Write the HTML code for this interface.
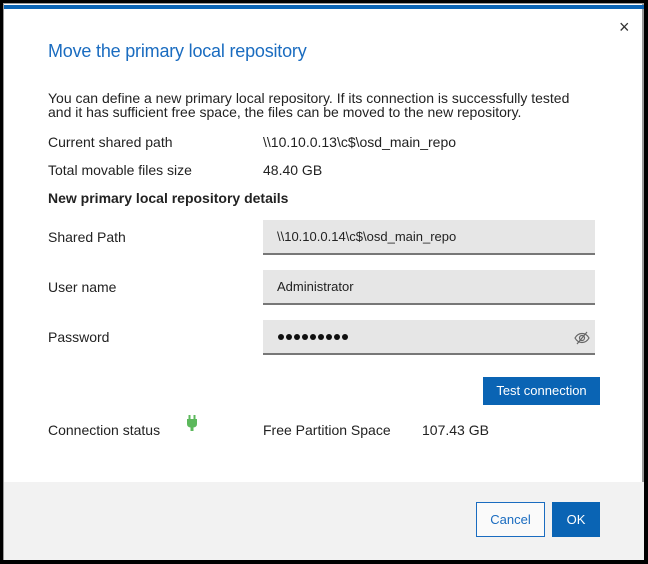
<!DOCTYPE html>
<html><head><meta charset="utf-8"><style>
*{margin:0;padding:0;box-sizing:border-box}
body{width:648px;height:564px;background:#000;position:relative;font-family:"Liberation Sans",Arial,sans-serif;color:#222;overflow:hidden}
.dlg{position:absolute;left:3px;top:3px;width:641px;height:557px;background:#fff;border-left:1px solid #999;border-top:1px solid #999;border-right:2px solid #999}
.bar{position:absolute;left:0;top:1px;right:0;height:4px;background:#0a64b4}
.foot{position:absolute;left:0;right:0;top:478px;bottom:0;background:#f2f2f2}
.t{position:absolute;font-size:14px;white-space:nowrap}
.in{position:absolute;left:263px;width:332px;height:35px;background:#e6e6e6;border-bottom:2px solid #777;font-size:13px;padding-left:14px;line-height:34px}
.btn{position:absolute;font-size:13px;text-align:center}
.d{position:absolute;top:334px;width:6px;height:6px;border-radius:50%;background:#111}
</style></head><body>
<div class="dlg"></div>
<div style="position:absolute;left:4px;top:4px;width:640px;height:556px">
<div class="bar"></div>
<div class="foot"></div>
</div>
<div class="t" style="left:619px;top:17px;font-size:18px;color:#333">×</div>
<div class="t" style="left:48px;top:41px;font-size:18px;color:#1a6cc0;letter-spacing:-0.2px">Move the primary local repository</div>
<div class="t" style="left:48px;top:91px;line-height:14px">You can define a new primary local repository. If its connection is successfully tested<br>and it has sufficient free space, the files can be moved to the new repository.</div>
<div class="t" style="left:48px;top:134px">Current shared path</div>
<div class="t" style="left:263px;top:134px">\\10.10.0.13\c$\osd_main_repo</div>
<div class="t" style="left:48px;top:162px">Total movable files size</div>
<div class="t" style="left:263px;top:162px">48.40 GB</div>
<div class="t" style="left:48px;top:190px;font-weight:bold">New primary local repository details</div>
<div class="t" style="left:48px;top:229px">Shared Path</div>
<div class="in" style="top:220px">\\10.10.0.14\c$\osd_main_repo</div>
<div class="t" style="left:48px;top:279px">User name</div>
<div class="in" style="top:270px">Administrator</div>
<div class="t" style="left:48px;top:329px">Password</div>
<div class="in" style="top:320px"></div>
<div class="d" style="left:278px"></div><div class="d" style="left:286px"></div><div class="d" style="left:294px"></div><div class="d" style="left:302px"></div><div class="d" style="left:310px"></div><div class="d" style="left:318px"></div><div class="d" style="left:326px"></div><div class="d" style="left:334px"></div><div class="d" style="left:342px"></div>
<svg style="position:absolute;left:574px;top:330px" width="16" height="16" viewBox="0 0 16 16"><path d="M1 8C3 4.5 5.5 3.5 8 3.5S13 4.5 15 8C13 11.5 10.5 12.5 8 12.5S3 11.5 1 8Z" fill="none" stroke="#666" stroke-width="1.2"/><circle cx="8" cy="8" r="2.5" fill="none" stroke="#666" stroke-width="1.2"/><path d="M3 14L13 2" stroke="#666" stroke-width="1.2"/></svg>
<div class="btn" style="left:483px;top:377px;width:117px;height:28px;background:#0a64b4;color:#fff;line-height:28px">Test connection</div>
<div class="t" style="left:48px;top:422px">Connection status</div>
<svg style="position:absolute;left:186px;top:415px" width="12" height="17" viewBox="0 0 12 17"><rect x="2.5" y="0" width="2" height="5" fill="#5cb85c"/><rect x="7.5" y="0" width="2" height="5" fill="#5cb85c"/><path d="M1 4H11V9Q11 12 7.5 12.5V16H4.5V12.5Q1 12 1 9Z" fill="#5cb85c"/></svg>
<div class="t" style="left:263px;top:422px">Free Partition Space</div>
<div class="t" style="left:422px;top:422px">107.43 GB</div>
<div class="btn" style="left:476px;top:502px;width:69px;height:35px;border:1px solid #1a6cc0;background:#fafafa;color:#1a6cc0;line-height:33px">Cancel</div>
<div class="btn" style="left:552px;top:502px;width:48px;height:35px;background:#0a64b4;color:#fff;line-height:35px">OK</div>
</body></html>
